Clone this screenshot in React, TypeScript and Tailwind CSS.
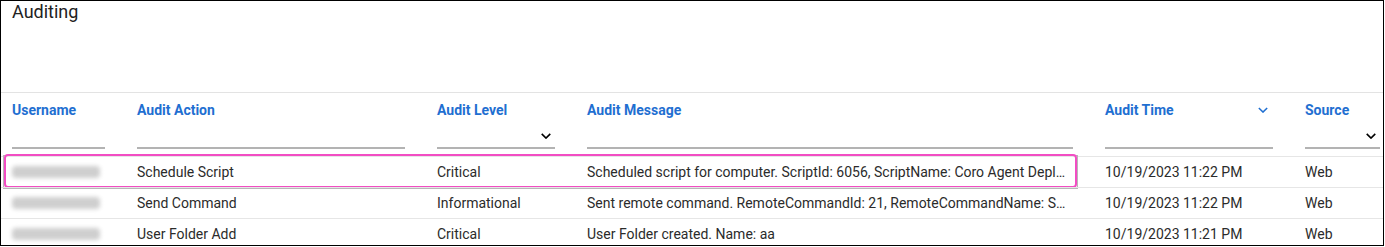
import React from "react";

const font = { fontFamily: "Roboto, 'Liberation Sans', sans-serif" };

type Row = {
  action: string;
  level: string;
  message: string;
  time: string;
  source: string;
};

const rows: Row[] = [
  {
    action: "Schedule Script",
    level: "Critical",
    message:
      "Scheduled script for computer. ScriptId: 6056, ScriptName: Coro Agent Deployment",
    time: "10/19/2023 11:22 PM",
    source: "Web",
  },
  {
    action: "Send Command",
    level: "Informational",
    message:
      "Sent remote command. RemoteCommandId: 21, RemoteCommandName: Script Runner",
    time: "10/19/2023 11:22 PM",
    source: "Web",
  },
  {
    action: "User Folder Add",
    level: "Critical",
    message: "User Folder created. Name: aa",
    time: "10/19/2023 11:21 PM",
    source: "Web",
  },
];

const grid =
  "grid grid-cols-[93px_268px_118px_486px_168px_75px] gap-x-[32px] pl-[11px]";

function Chevron({ className }: { className?: string }) {
  return (
    <svg viewBox="0 0 12 7" className={className} fill="none">
      <path d="M1 1l5 5 5-5" stroke="currentColor" strokeWidth="1.8" />
    </svg>
  );
}

function Header({ label, select, sort }: { label: string; select?: boolean; sort?: boolean }) {
  return (
    <div className="flex flex-col h-full">
      <div className="flex items-center justify-between h-[16px] mt-[9px]">
        <span className="text-[14px] font-bold text-[#1f6fd1] whitespace-nowrap">{label}</span>
        {sort && <Chevron className="w-[10px] h-[6px] mr-[5px] text-[#1f6fd1]" />}
      </div>
      <div className="flex-1 flex items-end justify-end pb-[8px]">
        {select && <Chevron className="w-[12px] h-[6px] mr-[3px] text-black" />}
      </div>
      <div className="h-[2px] bg-[#b3b3b3] mb-[7px]" />
    </div>
  );
}

export default function App() {
  return (
    <div className="w-[1385px] h-[247px] bg-white overflow-hidden" style={font}>
      <div className="w-[1384px] h-[246px] border border-black overflow-hidden flex flex-col">
        <div className="h-[92px] shrink-0 border-b border-[#e3e3e3] pl-[11px]">
          <h1 className="text-[18px] leading-[22px] text-[#222] font-normal">Auditing</h1>
        </div>

        <div className={`${grid} h-[63px] shrink-0`}>
          <Header label="Username" />
          <Header label="Audit Action" />
          <Header label="Audit Level" select />
          <Header label="Audit Message" />
          <Header label="Audit Time" sort />
          <Header label="Source" select />
        </div>

        {rows.map((r, i) => (
          <div
            key={i}
            className={`${grid} relative h-[31px] items-center border-t border-[#e6e6e6] text-[14px] text-[#2b2b2b] shrink-0`}
          >
            <div className="h-[12px] w-[88px] bg-[#cfcfcf] rounded-sm blur-[2px]" />
            <div className="whitespace-nowrap">{r.action}</div>
            <div className="whitespace-nowrap">{r.level}</div>
            <div className="truncate pr-[6px]">{r.message}</div>
            <div className="whitespace-nowrap">{r.time}</div>
            <div className="whitespace-nowrap">{r.source}</div>

            {i === 0 && (
              <>
                {/* selected row outline + highlight annotation */}
                <div className="absolute left-[2px] -top-[2px] w-[1075px] h-[34px] border border-[#b8b8b8]" />
                <div className="absolute left-[3px] -top-[3px] w-[1073px] h-[34px] border-2 border-[#f24dc3] rounded-[4px]" />
              </>
            )}
          </div>
        ))}
      </div>
    </div>
  );
}
